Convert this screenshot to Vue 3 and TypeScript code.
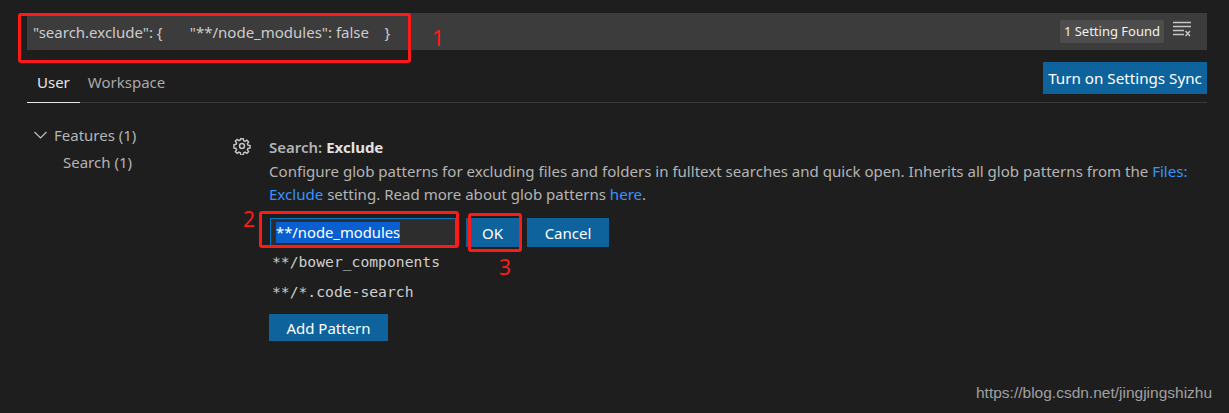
<script setup lang="ts">
const patterns: string[] = ['**/bower_components', '**/*.code-search']
</script>

<template>
  <div class="page">
    <div class="searchbar">
      <span class="query">"search.exclude": {&nbsp;&nbsp;&nbsp;&nbsp;&nbsp;&nbsp;&nbsp;"**/node_modules": false&nbsp;&nbsp;&nbsp;&nbsp;}</span>
      <span class="count">1 Setting Found</span>
      <svg class="clear" width="20" height="16" viewBox="0 0 20 16" fill="none" stroke="#c5c5c5" stroke-width="1.3">
        <path d="M1 1.5h18M1 5.5h18M1 9.5h11M1 13.5h11" />
        <path d="M13.5 10l4.5 5M18 10l-4.5 5" stroke-width="1.5" />
      </svg>
    </div>

    <div class="tabsrow">
      <div class="tabs">
        <span class="tab active">User</span>
        <span class="tab second">Workspace</span>
      </div>
      <button class="btn sync">Turn on Settings Sync</button>
    </div>

    <div class="body">
      <aside class="tree">
        <div class="node">
          <svg width="16" height="16" viewBox="0 0 16 16" fill="none" stroke="#c5c5c5" stroke-width="1.1">
            <path d="M1.5 5l6 6 6-6" />
          </svg>
          <span>Features (1)</span>
        </div>
        <div class="node child">Search (1)</div>
      </aside>

      <div class="gearcol">
        <svg width="18" height="18" viewBox="0 0 16 16" fill="none" stroke="#c5c5c5" stroke-width="1.3">
          <circle cx="8" cy="8" r="2.2" />
          <path d="M6.9 1.5h2.2l.4 1.9 1.2.5 1.6-1.1 1.6 1.6-1.1 1.6.5 1.2 1.9.4v2.2l-1.9.4-.5 1.2 1.1 1.6-1.6 1.6-1.6-1.1-1.2.5-.4 1.9H6.9l-.4-1.9-1.2-.5-1.6 1.1-1.6-1.6 1.1-1.6-.5-1.2-1.9-.4V6.9l1.9-.4.5-1.2-1.1-1.6 1.6-1.6 1.6 1.1 1.2-.5z" />
        </svg>
      </div>

      <section class="setting">
        <div class="title">Search: <b>Exclude</b></div>
        <p class="desc">
          Configure glob patterns for excluding files and folders in fulltext searches and quick open. Inherits all glob patterns from the <a>Files:<br />Exclude</a> setting. Read more about glob patterns <a>here</a>.
        </p>
        <div class="editrow">
          <div class="input"><span class="sel">**/node_modules</span></div>
          <button class="btn ok">OK</button>
          <button class="btn cancel">Cancel</button>
        </div>
        <div v-for="p in patterns" :key="p" class="pattern">{{ p }}</div>
        <button class="btn add">Add Pattern</button>
      </section>
    </div>

    <i class="mark m1"></i>
    <i class="mark m2"></i>
    <i class="mark m3"></i>
    <span class="num n1">1</span>
    <span class="num n2">2</span>
    <span class="num n3">3</span>
    <span class="watermark">https://blog.csdn.net/jingjingshizhu</span>
  </div>
</template>

<style>
html, body { margin: 0; background: #1e1e1e; }
</style>

<style scoped>
.page {
  position: relative;
  width: 1229px;
  height: 413px;
  overflow: hidden;
  box-sizing: border-box;
  padding: 13px 22px 0 27px;
  background: #1e1e1e;
  color: #cccccc;
  font-family: "Noto Sans", sans-serif;
  font-size: 15px;
}
.searchbar {
  display: flex;
  align-items: center;
  height: 37px;
  background: #3c3c3c;
  padding: 0 15px 0 6px;
}
.query { flex: 1; color: #cccccc; white-space: pre; }
.count {
  background: #4d4d4d;
  color: #f0f0f0;
  border-radius: 2px;
  font-size: 13px;
  padding: 2px 4px;
  line-height: 19px;
  margin-right: 8px;
}
.clear { margin-top: -5px; }
.tabsrow {
  display: flex;
  justify-content: space-between;
  border-bottom: 1px solid #3a3a3a;
  height: 52px;
}
.tabs { display: flex; align-items: flex-end; }
.tab {
  padding: 0 10px 8px;
  height: 24px;
  line-height: 24px;
  color: #a9a9a9;
  margin-bottom: -1px;
  border-bottom: 1px solid transparent;
}
.tab.active { color: #e7e7e7; border-bottom-color: #e7e7e7; }
.tab.second { padding-left: 8px; }
.btn {
  border: 0;
  background: #0e639c;
  color: #ffffff;
  font: inherit;
  padding: 0;
}
.sync { width: 164px; height: 32px; margin-top: 12px; font-size: 15.2px; }
.body { display: flex; }
.tree { width: 206px; padding: 18px 0 0 6px; box-sizing: border-box; color: #b4b4b4; }
.node { display: flex; align-items: center; gap: 5px; height: 27px; }
.node.child { padding-left: 30px; }
.gearcol { width: 36px; padding-top: 34px; }
.setting { flex: 1; padding-top: 34px; }
.title { color: #b4b4b4; line-height: 20px; font-weight: 600; }
.title b { color: #e2e2e2; font-weight: 700; }
.desc { margin: 3px 0 0; line-height: 23px; color: #b4b4b4; white-space: nowrap; font-size: 15.07px; }
.desc a { color: #3794ff; }
.editrow { display: flex; align-items: center; margin-top: 12px; margin-left: 1px; }
.input {
  width: 186px;
  height: 29px;
  box-sizing: border-box;
  border: 1px solid #007acc;
  background: #2d2d2d;
  padding-left: 5px;
  display: flex;
  align-items: center;
}
.sel { background: #0a5fd0; color: #fff; font-size: 14.8px; line-height: 21px; }
.ok { width: 53px; height: 29px; margin-left: 10px; }
.cancel { width: 82px; height: 29px; margin-left: 8px; }
.pattern {
  font-family: "DejaVu Sans Mono", monospace;
  font-size: 14.7px;
  color: #cfcfcf;
  height: 30px;
  line-height: 30px;
  padding-left: 3px;
}
.add { display: block; width: 119px; height: 27px; margin-top: 7px; }
.mark {
  position: absolute;
  box-sizing: border-box;
  border: 3px solid #ff1a1a;
  border-radius: 3px;
}
.m1 { left: 18px; top: 13px; width: 393px; height: 50px; }
.m2 { left: 259px; top: 211px; width: 200px; height: 37px; }
.m3 { left: 468px; top: 213px; width: 54px; height: 39px; }
.num { position: absolute; color: #ff1a1a; font-size: 21px; line-height: 24px; }
.n1 { left: 432px; top: 26px; }
.n2 { left: 243px; top: 207px; }
.n3 { left: 499px; top: 255px; }
.watermark {
  position: absolute;
  left: 976px;
  top: 383px;
  color: #a0a0a0;
  font-family: "Liberation Sans", sans-serif;
  font-size: 15.5px;
  line-height: 20px;
}
</style>
